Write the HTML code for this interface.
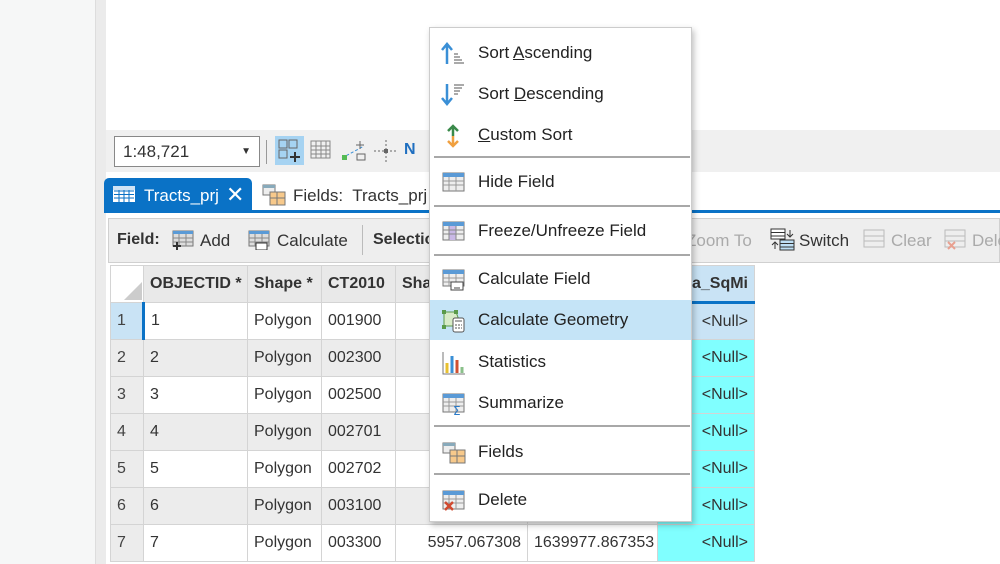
<!DOCTYPE html>
<html><head><meta charset="utf-8"><style>
*{box-sizing:border-box;margin:0;padding:0}
html,body{width:1000px;height:564px;overflow:hidden}
body{position:relative;background:#fff;font-family:"Segoe UI","Liberation Sans","DejaVu Sans",sans-serif;color:#333}
.a{position:absolute}
table{border-collapse:collapse;position:absolute;left:110px;top:265px;font-size:16px;table-layout:fixed;width:644px}
td,th{border:1px solid #d4d4d4;height:37px;padding:0 6px;white-space:nowrap;overflow:hidden}
th{background:#e9e9e9;text-align:left;font-weight:bold;color:#333}
tr.e td{background:#ececec}
tr.o td{background:#fff}
td.rh{background:#ececec!important;color:#444}
td.r{text-align:right}
td.n{background:#80ffff!important;text-align:right;color:#333}
.menu{position:absolute;left:429px;top:27px;width:263px;height:495px;background:#fff;border:1px solid #ccc;box-shadow:2px 3px 6px rgba(0,0,0,.25)}
.it{position:absolute;left:0;width:261px;height:40px;line-height:40px;padding-left:48px;font-size:17px;color:#222}
.it svg{position:absolute;left:11px;top:9px}
.sep{position:absolute;left:4px;width:256px;height:2px;background:#a8a8a8}
.tb{font-size:17px;color:#333}
</style></head><body>
<div class="a" style="left:0;top:0;width:95px;height:564px;background:#f6f7f7"></div>
<div class="a" style="left:95px;top:0;width:11px;height:564px;background:#ebebeb;border-left:1px solid #ddd"></div>
<div class="a" style="left:106px;top:130px;width:894px;height:42px;background:#f0f0f0"></div>
<div class="a" style="left:114px;top:136px;width:146px;height:31px;background:#fff;border:1px solid #888;font-size:17px;line-height:29px;padding-left:8px">1:48,721<span style="position:absolute;right:8px;font-size:10px">▼</span></div>
<div class="a" style="left:266px;top:140px;width:1px;height:24px;background:#999"></div>
<div class="a" style="left:275px;top:136px;width:29px;height:29px;background:#a6d3f2"></div>
<svg class="a" style="left:278px;top:139px" width="24" height="24"><rect x="1" y="1" width="8" height="8" fill="none" stroke="#666"/><rect x="11" y="1" width="8" height="8" fill="none" stroke="#666"/><rect x="1" y="11" width="8" height="8" fill="none" stroke="#666"/><path d="M17 13v10M12 18h10" stroke="#333" stroke-width="2"/></svg>
<svg class="a" style="left:310px;top:140px" width="22" height="20"><path d="M1 1h19v17H1zM1 6h19M1 10h19M1 14h19M6 1v17M11 1v17M16 1v17" stroke="#888" fill="none"/></svg>
<svg class="a" style="left:340px;top:140px" width="28" height="22"><path d="M2 18l22-12" stroke="#3a8fd6" stroke-dasharray="3 2"/><rect x="2" y="15" width="5" height="5" fill="#5b5"/><rect x="17" y="14" width="8" height="6" fill="none" stroke="#666"/><path d="M20 1v8M16 5h8" stroke="#666"/></svg>
<svg class="a" style="left:374px;top:140px" width="24" height="22"><path d="M12 0v22M0 11h24" stroke="#666" stroke-dasharray="2 2"/><rect x="10" y="9" width="4" height="4" fill="#666"/></svg>
<div class="a" style="left:404px;top:141px;font-weight:bold;color:#1f6fc0;font-size:16px">N</div>
<div class="a" style="left:104px;top:178px;width:148px;height:33px;background:#0a72c6;border-radius:5px 5px 0 0"></div>
<svg class="a" style="left:113px;top:186px" width="22" height="16"><rect x="0.5" y="0.5" width="21" height="15" fill="#fff" stroke="#fff"/><path d="M1 5h20M1 8.5h20M1 12h20M6 1v15M11 1v15M16 1v15" stroke="#0a72c6"/><rect x="0" y="0" width="22" height="4" fill="#cfe3f5"/></svg>
<div class="a" style="left:144px;top:186px;color:#fff;font-size:17px">Tracts_prj</div>
<div class="a" style="left:226px;top:182px;color:#fff;font-size:22px">✕</div>
<svg class="a" style="left:262px;top:184px" width="24" height="22"><rect x="1" y="1" width="12" height="10" fill="#eee" stroke="#777"/><rect x="1" y="1" width="12" height="3" fill="#8ab"/><rect x="8" y="8" width="15" height="13" fill="#f7c98b" stroke="#777"/><path d="M8 14h15M15 8v13" stroke="#777"/></svg>
<div class="a" style="left:293px;top:186px;font-size:17px;color:#333">Fields:&nbsp; Tracts_prj</div>
<div class="a" style="left:104px;top:210px;width:896px;height:3px;background:#0a72c6"></div>
<div class="a" style="left:108px;top:218px;width:892px;height:45px;background:#eeeeee;border:1px solid #d0d0d0"></div>
<div class="a tb" style="left:117px;top:231px;font-weight:bold;font-size:16px">Field:</div>
<svg class="a" style="left:172px;top:230px" width="22" height="20"><rect x="1" y="1" width="20" height="15" fill="#ddd" stroke="#777"/><rect x="1" y="1" width="20" height="3" fill="#5a9ad6"/><path d="M1 8h20M1 12h20M7 4v12M14 4v12" stroke="#888"/><path d="M5 12v8M1 16h8" stroke="#333" stroke-width="2"/></svg>
<div class="a tb" style="left:200px;top:231px">Add</div>
<svg class="a" style="left:248px;top:230px" width="22" height="20"><rect x="1" y="1" width="20" height="15" fill="#ddd" stroke="#777"/><rect x="1" y="1" width="20" height="3" fill="#5a9ad6"/><path d="M1 8h20M1 12h20M7 4v12M14 4v12" stroke="#888"/><rect x="8" y="13" width="11" height="7" fill="#fff" stroke="#333"/></svg>
<div class="a tb" style="left:277px;top:231px">Calculate</div>
<div class="a" style="left:362px;top:225px;width:1px;height:30px;background:#bbb"></div>
<div class="a tb" style="left:373px;top:231px;font-weight:bold;font-size:16px">Selection:</div>
<div class="a tb" style="left:686px;top:231px;color:#aaa">Zoom To</div>
<svg class="a" style="left:770px;top:228px" width="26" height="24"><rect x="1" y="1" width="14" height="10" fill="#fff" stroke="#333"/><path d="M1 4.5h14M1 8h14" stroke="#333"/><rect x="10" y="12" width="14" height="10" fill="#bfe0f6" stroke="#333"/><path d="M10 15.5h14M10 19h14" stroke="#333"/><path d="M20 2v7M17 6l3 3 3-3M5 21v-7M2 17l3-3 3 3" stroke="#333" fill="none"/></svg>
<div class="a tb" style="left:799px;top:231px">Switch</div>
<svg class="a" style="left:863px;top:229px" width="22" height="20"><rect x="1" y="1" width="20" height="17" fill="none" stroke="#bbb"/><path d="M1 7h20M1 12h20" stroke="#bbb"/></svg>
<div class="a tb" style="left:891px;top:231px;color:#aaa">Clear</div>
<svg class="a" style="left:944px;top:229px" width="22" height="22"><rect x="1" y="1" width="20" height="17" fill="none" stroke="#bbb"/><path d="M1 7h20M1 12h20" stroke="#bbb"/><path d="M4 13l7 7M11 13l-7 7" stroke="#e8a090" stroke-width="2"/></svg>
<div class="a tb" style="left:972px;top:231px;color:#aaa">Dele</div>
<table>
<colgroup><col style="width:33px"><col style="width:104px"><col style="width:74px"><col style="width:74px"><col style="width:132px"><col style="width:130px"><col style="width:97px"></colgroup>
<tr><th style="background:#fff;position:relative"><svg width="18" height="18" style="position:absolute;left:13px;top:16px"><path d="M18 0V18H0Z" fill="#ccc"/></svg></th><th>OBJECTID *</th><th>Shape *</th><th>CT2010</th><th>Shape_Length</th><th></th><th style="background:#c9e3f5;border-bottom:3px solid #0a72c6;text-align:right">Area_SqMi</th></tr>
<tr class="o"><td class="rh" style="background:#c9e3f5!important;border-right:3px solid #0a72c6">1</td><td>1</td><td>Polygon</td><td>001900</td><td class="r">2964.1</td><td class="r"></td><td class="n" style="background:#c9e3f5!important">&lt;Null&gt;</td></tr>
<tr class="e"><td class="rh">2</td><td>2</td><td>Polygon</td><td>002300</td><td class="r">4</td><td></td><td class="n">&lt;Null&gt;</td></tr>
<tr class="o"><td class="rh">3</td><td>3</td><td>Polygon</td><td>002500</td><td class="r">5</td><td></td><td class="n">&lt;Null&gt;</td></tr>
<tr class="e"><td class="rh">4</td><td>4</td><td>Polygon</td><td>002701</td><td class="r">4</td><td></td><td class="n">&lt;Null&gt;</td></tr>
<tr class="o"><td class="rh">5</td><td>5</td><td>Polygon</td><td>002702</td><td class="r">6</td><td></td><td class="n">&lt;Null&gt;</td></tr>
<tr class="e"><td class="rh">6</td><td>6</td><td>Polygon</td><td>003100</td><td class="r">5</td><td></td><td class="n">&lt;Null&gt;</td></tr>
<tr class="o"><td class="rh">7</td><td>7</td><td>Polygon</td><td>003300</td><td class="r">5957.067308</td><td class="r">1639977.867353</td><td class="n">&lt;Null&gt;</td></tr>
</table>
<div class="menu">
<div class="it" style="top:5px"><svg width="26" height="24"><path d="M6 22V3M1 8l5-6 5 6" stroke="#3a8fd6" stroke-width="2.5" fill="none"/><path d="M13 12h4M13 15h6M13 18h8M13 21h10" stroke="#555"/></svg>Sort <u>A</u>scending</div>
<div class="it" style="top:46px"><svg width="26" height="24"><path d="M6 1v20M1 15l5 6 5-6" stroke="#3a8fd6" stroke-width="2.5" fill="none"/><path d="M13 2h10M13 5h8M13 8h6M13 11h4" stroke="#555"/></svg>Sort <u>D</u>escending</div>
<div class="it" style="top:87px"><svg width="26" height="24"><path d="M12 2v10M7 7l5-5 5 5" stroke="#3a8a4a" stroke-width="2.5" fill="none"/><path d="M12 12v10M7 17l5 5 5-5" stroke="#f0a040" stroke-width="2.5" fill="none"/></svg><u>C</u>ustom Sort</div>
<div class="sep" style="top:128px"></div>
<div class="it" style="top:134px"><svg width="26" height="24"><rect x="2" y="2" width="21" height="18" fill="#eee" stroke="#777"/><rect x="2" y="2" width="21" height="4" fill="#5a9ad6"/><path d="M2 10h21M2 14h21M8 6v14M15 6v14" stroke="#999"/></svg>Hide Field</div>
<div class="sep" style="top:177px"></div>
<div class="it" style="top:183px"><svg width="26" height="24"><rect x="2" y="2" width="21" height="18" fill="#eee" stroke="#777"/><rect x="2" y="2" width="21" height="4" fill="#5a9ad6"/><rect x="8" y="6" width="7" height="14" fill="#c9b8e6"/><path d="M2 10h21M2 14h21M8 6v14M15 6v14" stroke="#888"/></svg>Freeze/Unfreeze Field</div>
<div class="sep" style="top:226px"></div>
<div class="it" style="top:231px"><svg width="26" height="24"><rect x="2" y="2" width="21" height="16" fill="#eee" stroke="#777"/><rect x="2" y="2" width="21" height="4" fill="#5a9ad6"/><path d="M2 10h21M2 14h21M8 6v12M15 6v12" stroke="#999"/><rect x="10" y="14" width="12" height="8" fill="#fff" stroke="#444"/><path d="M13 20h6" stroke="#444"/></svg>Calculate Field</div>
<div class="it" style="top:272px;background:#c5e4f7"><svg width="26" height="24"><path d="M3 3h12l3 8v6H3z" fill="#d8ebc8" stroke="#5a9a4a"/><rect x="1" y="1" width="4" height="4" fill="#5a9a4a"/><rect x="13" y="1" width="4" height="4" fill="#5a9a4a"/><rect x="1" y="16" width="4" height="4" fill="#5a9a4a"/><rect x="12" y="9" width="11" height="14" rx="2" fill="#fff" stroke="#555"/><path d="M14 12h7M14 16h2M17 16h2M20 16h1M14 19h2M17 19h2M20 19h1" stroke="#555"/></svg>Calculate Geometry</div>
<div class="it" style="top:314px"><svg width="26" height="24"><path d="M2 1v22h22" stroke="#777" fill="none"/><path d="M6 22V12" stroke="#e8c030" stroke-width="3"/><path d="M11 22V5" stroke="#3a8fd6" stroke-width="3"/><path d="M16 22V9" stroke="#d05030" stroke-width="3"/><path d="M21 22v-6" stroke="#8ac08a" stroke-width="3"/></svg>Statistics</div>
<div class="it" style="top:355px"><svg width="26" height="24"><rect x="2" y="2" width="21" height="18" fill="#eee" stroke="#777"/><rect x="2" y="2" width="21" height="4" fill="#5a9ad6"/><path d="M2 10h21M2 14h21M8 6v14M15 6v14" stroke="#999"/><text x="12" y="23" font-size="12" fill="#2a7ac8" font-family="DejaVu Sans">Σ</text></svg>Summarize</div>
<div class="sep" style="top:397px"></div>
<div class="it" style="top:404px"><svg width="26" height="24"><rect x="2" y="2" width="12" height="10" fill="#eee" stroke="#777"/><rect x="2" y="2" width="12" height="3" fill="#8ab"/><rect x="9" y="9" width="15" height="13" fill="#f7c98b" stroke="#777"/><path d="M9 15h15M16 9v13" stroke="#777"/></svg>Fields</div>
<div class="sep" style="top:445px"></div>
<div class="it" style="top:452px"><svg width="26" height="24"><rect x="2" y="2" width="21" height="18" fill="#eee" stroke="#777"/><rect x="2" y="2" width="21" height="4" fill="#5a9ad6"/><path d="M2 10h21M2 14h21M8 6v14M15 6v14" stroke="#999"/><path d="M4 13l8 8M12 13l-8 8" stroke="#d04a30" stroke-width="2.5"/></svg>Delete</div>
</div>
</body></html>
